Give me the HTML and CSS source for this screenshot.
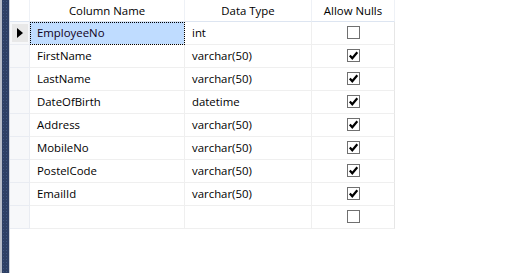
FILE: index.html
```html
<!DOCTYPE html>
<html>
<head>
<meta charset="utf-8">
<link rel="stylesheet" href="styles.css">
</head>
<body>
<div class="frame">
  <div class="sidebar"><div class="edge"></div><div class="bar"></div><div class="line"></div></div>
  <div class="canvas">
    <div class="grid">
      <div class="hcell corner"></div>
      <div class="hcell">Column Name</div>
      <div class="hcell">Data Type</div>
      <div class="hcell">Allow Nulls</div>

      <div class="rh current"><span class="arrowbox"><span class="arrow"></span></span></div>
      <div class="cell name selected">EmployeeNo</div>
      <div class="cell">int</div>
      <div class="cell chk"><span class="box"></span></div>

      <div class="rh"></div><div class="cell name">FirstName</div><div class="cell">varchar(50)</div>
      <div class="cell chk"><span class="box on"><svg viewBox="0 0 11 11"><path d="M1.8 5.4 L4.3 8.2 L9.3 2.2" fill="none" stroke="#000" stroke-width="2.2"/></svg></span></div>

      <div class="rh"></div><div class="cell name">LastName</div><div class="cell">varchar(50)</div>
      <div class="cell chk"><span class="box on"><svg viewBox="0 0 11 11"><path d="M1.8 5.4 L4.3 8.2 L9.3 2.2" fill="none" stroke="#000" stroke-width="2.2"/></svg></span></div>

      <div class="rh"></div><div class="cell name">DateOfBirth</div><div class="cell">datetime</div>
      <div class="cell chk"><span class="box on"><svg viewBox="0 0 11 11"><path d="M1.8 5.4 L4.3 8.2 L9.3 2.2" fill="none" stroke="#000" stroke-width="2.2"/></svg></span></div>

      <div class="rh"></div><div class="cell name">Address</div><div class="cell">varchar(50)</div>
      <div class="cell chk"><span class="box on"><svg viewBox="0 0 11 11"><path d="M1.8 5.4 L4.3 8.2 L9.3 2.2" fill="none" stroke="#000" stroke-width="2.2"/></svg></span></div>

      <div class="rh"></div><div class="cell name">MobileNo</div><div class="cell">varchar(50)</div>
      <div class="cell chk"><span class="box on"><svg viewBox="0 0 11 11"><path d="M1.8 5.4 L4.3 8.2 L9.3 2.2" fill="none" stroke="#000" stroke-width="2.2"/></svg></span></div>

      <div class="rh"></div><div class="cell name">PostelCode</div><div class="cell">varchar(50)</div>
      <div class="cell chk"><span class="box on"><svg viewBox="0 0 11 11"><path d="M1.8 5.4 L4.3 8.2 L9.3 2.2" fill="none" stroke="#000" stroke-width="2.2"/></svg></span></div>

      <div class="rh"></div><div class="cell name">EmailId</div><div class="cell">varchar(50)</div>
      <div class="cell chk"><span class="box on"><svg viewBox="0 0 11 11"><path d="M1.8 5.4 L4.3 8.2 L9.3 2.2" fill="none" stroke="#000" stroke-width="2.2"/></svg></span></div>

      <div class="rh"></div><div class="cell name"></div><div class="cell"></div>
      <div class="cell chk"><span class="box"></span></div>
    </div>
  </div>
</div>
</body>
</html>
```
FILE: styles.css
```css
html, body {
  margin: 0;
  padding: 0;
  background: #fff;
}
.frame {
  display: flex;
  width: 520px;
  height: 273px;
  overflow: hidden;
  font-family: "Segoe UI", "Open Sans", "Noto Sans", sans-serif;
  font-size: 11.4px;
  color: #000;
}
.sidebar {
  display: flex;
  flex: none;
}
.sidebar .edge {
  width: 2px;
  background: #b9bec8;
}
.sidebar .bar {
  width: 7px;
  background-color: #2e4064;
  background-image: radial-gradient(#3f557e 0.7px, transparent 0.8px);
  background-size: 3px 3px;
}
.sidebar .line {
  width: 1px;
  background: #cfd3da;
}
.canvas {
  flex: 1;
  background: #fff;
}
.grid {
  display: grid;
  grid-template-columns: 20px 155px 127px 83px;
  grid-template-rows: 22px repeat(9, 23px);
  width: 385px;
}
.hcell {
  display: flex;
  align-items: center;
  justify-content: center;
  border-right: 1px solid #eef1f6;
  border-bottom: 1px solid #dde5f1;
  padding-bottom: 1px;
  box-sizing: border-box;
  color: #000;
}
.hcell.corner {
  background: #fff;
}
.rh {
  background: #f7f8fa;
  border-right: 1px solid #e9ecf2;
  border-bottom: 1px solid #e9ecf2;
  box-sizing: border-box;
  display: flex;
  align-items: center;
  justify-content: center;
}
.arrowbox {
  width: 16px;
  height: 18px;
  background: #e8e8e8;
  display: flex;
  align-items: center;
  justify-content: center;
}
.arrow {
  width: 0;
  height: 0;
  border-top: 5px solid transparent;
  border-bottom: 5px solid transparent;
  border-left: 6px solid #000;
  margin-left: 1px;
}
.cell {
  display: flex;
  align-items: center;
  padding-left: 7px;
  padding-bottom: 1px;
  border-right: 1px solid #efefef;
  border-bottom: 1px solid #efefef;
  box-sizing: border-box;
  color: #000;
}
.cell.selected {
  background: #bfdcff;
  outline: 1px dotted #000;
  outline-offset: -1px;
  color: #100020;
}
.cell.chk {
  justify-content: center;
  padding-left: 0;
  border-right: 1px solid #e6e6e6;
}
.box {
  width: 13px;
  height: 13px;
  box-sizing: border-box;
  border: 1px solid #707070;
  background: #fff;
  display: flex;
  align-items: center;
  justify-content: center;
}
.box svg {
  width: 11px;
  height: 11px;
  display: block;
}
```
